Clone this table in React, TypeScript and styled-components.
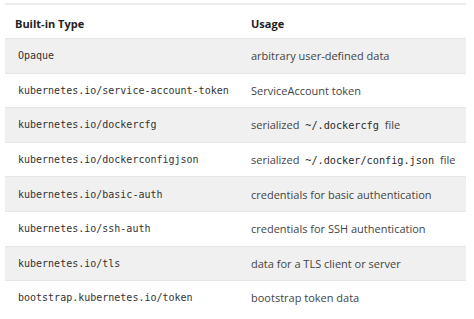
import React from 'react';
import styled, { createGlobalStyle } from 'styled-components';

const GlobalStyle = createGlobalStyle`
  html, body {
    margin: 0;
    padding: 0;
    background: #ffffff;
  }
  body {
    font-family: 'Open Sans', 'Liberation Sans', sans-serif;
  }
`;

const Page = styled.div`
  padding: 3px 8px 0 5px;
`;

const Table = styled.div`
  width: 461px;
  border-top: 2px solid #ececec;
  display: flex;
  flex-direction: column;
`;

const HeaderRow = styled.div`
  display: grid;
  grid-template-columns: 233px 1fr;
  height: 33px;
  box-sizing: border-box;
  padding-top: 3px;
  align-items: center;
`;

const HeadCell = styled.div<{ $first?: boolean }>`
  padding: 0 13px 0 ${(p) => (p.$first ? '10px' : '13px')};
  font-size: 11px;
  font-weight: 700;
  color: #222222;
`;

const BodyRow = styled.div<{ $striped: boolean }>`
  display: grid;
  grid-template-columns: 233px 1fr;
  height: 34.6px;
  box-sizing: border-box;
  align-items: center;
  border-top: 1px solid #e6e6e6;
  background: ${(p) => (p.$striped ? '#f0f0f0' : '#ffffff')};
`;

const TypeCell = styled.div`
  padding: 0 13px;
  font-family: 'DejaVu Sans Mono', 'Liberation Mono', monospace;
  font-size: 10px;
  color: #333333;
  white-space: nowrap;
`;

const UsageCell = styled.div`
  padding: 0 13px;
  font-size: 11px;
  color: #444444;
  white-space: nowrap;
`;

const Code = styled.code`
  font-family: 'DejaVu Sans Mono', 'Liberation Mono', monospace;
  font-size: 10.2px;
  color: #2a2a2a;
  padding: 0 3px;
`;

type Row = {
  type: string;
  usage: React.ReactNode;
};

function getRows(): Row[] {
  return [
    { type: 'Opaque', usage: 'arbitrary user-defined data' },
    { type: 'kubernetes.io/service-account-token', usage: 'ServiceAccount token' },
    {
      type: 'kubernetes.io/dockercfg',
      usage: (
        <>
          serialized <Code>~/.dockercfg</Code> file
        </>
      ),
    },
    {
      type: 'kubernetes.io/dockerconfigjson',
      usage: (
        <>
          serialized <Code>~/.docker/config.json</Code> file
        </>
      ),
    },
    { type: 'kubernetes.io/basic-auth', usage: 'credentials for basic authentication' },
    { type: 'kubernetes.io/ssh-auth', usage: 'credentials for SSH authentication' },
    { type: 'kubernetes.io/tls', usage: 'data for a TLS client or server' },
    { type: 'bootstrap.kubernetes.io/token', usage: 'bootstrap token data' },
  ];
}

function App() {
  const rows = getRows();
  return (
    <>
      <GlobalStyle />
      <Page>
        <Table>
          <HeaderRow>
            <HeadCell $first>Built-in Type</HeadCell>
            <HeadCell>Usage</HeadCell>
          </HeaderRow>
          {rows.map((row, i) => (
            <BodyRow key={row.type} $striped={i % 2 === 0}>
              <TypeCell>{row.type}</TypeCell>
              <UsageCell>{row.usage}</UsageCell>
            </BodyRow>
          ))}
        </Table>
      </Page>
    </>
  );
}

export default App;
